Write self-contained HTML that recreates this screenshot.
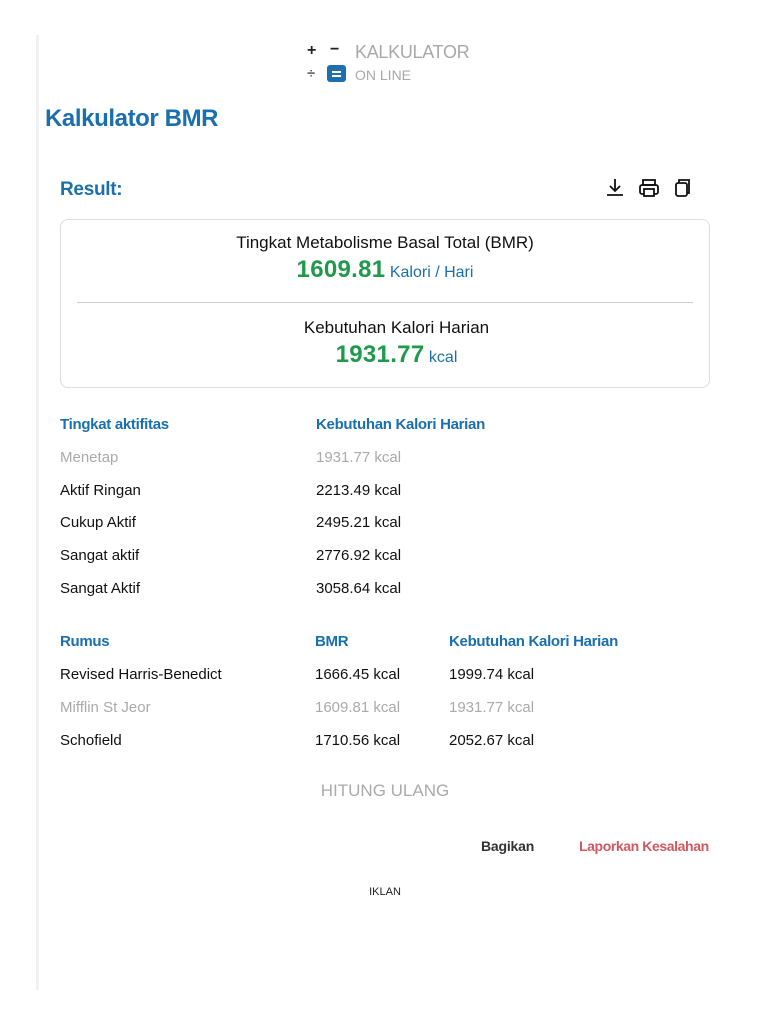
<!DOCTYPE html>
<html><head><meta charset="utf-8"><style>
*{margin:0;padding:0;box-sizing:border-box}
body{width:768px;height:1024px;background:#fff;font-family:"Liberation Sans",sans-serif;position:relative;overflow:hidden;color:#111}
.a{position:absolute;white-space:nowrap}
.blue{color:#1a6fae}
.g{color:#aaa}
.t{font-size:15px}
.h{font-size:15px;font-weight:bold;color:#1a6fae;letter-spacing:-0.3px}
</style></head><body>
<div class="a" style="left:36px;top:35px;width:3px;height:955px;background:#f1f1f1"></div>
<div class="a" style="left:307px;top:42px;font-size:16px;font-weight:bold;color:#222">+</div>
<div class="a" style="left:330px;top:41px;font-size:16px;font-weight:bold;color:#222">−</div>
<div class="a" style="left:307px;top:65px;font-size:15px;color:#222">÷</div>
<div class="a" style="left:327px;top:65px;width:19px;height:17px;background:#1f6fb0;border-radius:3px"></div>
<div class="a" style="left:332px;top:71px;width:9px;height:2px;background:#fff"></div>
<div class="a" style="left:332px;top:75px;width:9px;height:2px;background:#fff"></div>
<div class="a" style="left:355px;top:42px;font-size:18px;color:#a9a9a9;letter-spacing:-0.3px">KALKULATOR</div>
<div class="a" style="left:355px;top:67px;font-size:14px;color:#a9a9a9">ON LINE</div>
<div class="a blue" style="left:45px;top:105px;font-size:24px;font-weight:bold;letter-spacing:-0.4px">Kalkulator BMR</div>
<div class="a blue" style="left:60px;top:179px;font-size:19px;font-weight:bold;letter-spacing:-0.3px">Result:</div>
<svg class="a" style="left:604px;top:177px" width="110" height="24" fill="none" stroke="#111" stroke-width="1.8">
<path d="M11 2v12M6 9l5 5 5-5M3 18h16"/>
<rect x="39" y="3" width="12" height="5"/><rect x="36" y="8" width="18" height="9" rx="2"/><rect x="40" y="12" width="10" height="7" fill="#fff"/>
<rect x="72" y="6" width="11" height="13" rx="2"/><path d="M75 6V3h10v13h-2"/>
</svg>
<div class="a" style="left:60px;top:219px;width:650px;height:169px;border:1px solid #ddd;border-radius:8px"></div>
<div class="a" style="left:0;width:770px;top:233px;text-align:center;font-size:17px">Tingkat Metabolisme Basal Total (BMR)</div>
<div class="a" style="left:0;width:770px;top:256px;text-align:center"><span style="font-size:24px;font-weight:bold;color:#1e9a4a;letter-spacing:0.3px">1609.81</span> <span class="blue" style="font-size:16px">Kalori / Hari</span></div>
<div class="a" style="left:77px;top:302px;width:616px;height:1px;background:#ccc"></div>
<div class="a" style="left:0;width:793px;top:318px;text-align:center;font-size:17px">Kebutuhan Kalori Harian</div>
<div class="a" style="left:0;width:793px;top:341px;text-align:center"><span style="font-size:24px;font-weight:bold;color:#1e9a4a;letter-spacing:0.3px">1931.77</span> <span class="blue" style="font-size:16px">kcal</span></div>
<div class="a h" style="left:60px;top:416px">Tingkat aktifitas</div>
<div class="a h" style="left:316px;top:416px">Kebutuhan Kalori Harian</div>
<div class="a t g" style="left:60px;top:449px">Menetap</div><div class="a t g" style="left:316px;top:449px">1931.77 kcal</div>
<div class="a t" style="left:60px;top:482px">Aktif Ringan</div><div class="a t" style="left:316px;top:482px">2213.49 kcal</div>
<div class="a t" style="left:60px;top:514px">Cukup Aktif</div><div class="a t" style="left:316px;top:514px">2495.21 kcal</div>
<div class="a t" style="left:60px;top:547px">Sangat aktif</div><div class="a t" style="left:316px;top:547px">2776.92 kcal</div>
<div class="a t" style="left:60px;top:580px">Sangat Aktif</div><div class="a t" style="left:316px;top:580px">3058.64 kcal</div>
<div class="a h" style="left:60px;top:633px">Rumus</div>
<div class="a h" style="left:315px;top:633px">BMR</div>
<div class="a h" style="left:449px;top:633px">Kebutuhan Kalori Harian</div>
<div class="a t" style="left:60px;top:666px">Revised Harris-Benedict</div><div class="a t" style="left:315px;top:666px">1666.45 kcal</div><div class="a t" style="left:449px;top:666px">1999.74 kcal</div>
<div class="a t g" style="left:60px;top:699px">Mifflin St Jeor</div><div class="a t g" style="left:315px;top:699px">1609.81 kcal</div><div class="a t g" style="left:449px;top:699px">1931.77 kcal</div>
<div class="a t" style="left:60px;top:732px">Schofield</div><div class="a t" style="left:315px;top:732px">1710.56 kcal</div><div class="a t" style="left:449px;top:732px">2052.67 kcal</div>
<div class="a" style="left:0;width:770px;top:781px;text-align:center;font-size:17px;color:#aaa">HITUNG ULANG</div>
<div class="a" style="left:481px;top:838px;font-size:14px;font-weight:bold;color:#333;letter-spacing:-0.2px">Bagikan</div>
<div class="a" style="left:579px;top:838px;font-size:14px;font-weight:bold;color:#d0585f;letter-spacing:-0.4px">Laporkan Kesalahan</div>
<div class="a" style="left:0;width:770px;top:886px;text-align:center;font-size:11px;color:#222">IKLAN</div>
</body></html>
